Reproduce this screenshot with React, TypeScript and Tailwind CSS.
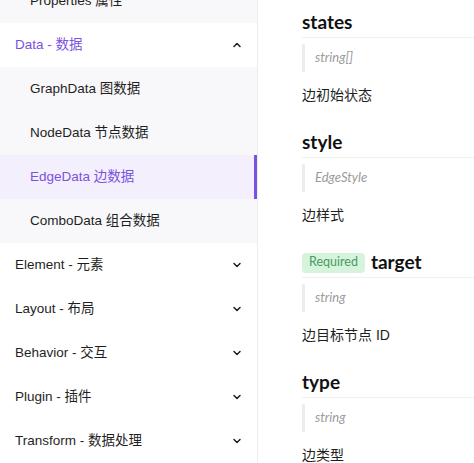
import React from "react";

interface NavItem {
  label: string;
  children?: string[];
  open?: boolean;
}

const nav: NavItem[] = [
  { label: "Data - 数据", open: true, children: ["GraphData 图数据", "NodeData 节点数据", "EdgeData 边数据", "ComboData 组合数据"] },
  { label: "Element - 元素" },
  { label: "Layout - 布局" },
  { label: "Behavior - 交互" },
  { label: "Plugin - 插件" },
  { label: "Transform - 数据处理" },
];

interface Prop {
  name: string;
  type: string;
  desc: string;
  required?: boolean;
}

const props: Prop[] = [
  { name: "states", type: "string[]", desc: "边初始状态" },
  { name: "style", type: "EdgeStyle", desc: "边样式" },
  { name: "target", type: "string", desc: "边目标节点 ID", required: true },
  { name: "type", type: "string", desc: "边类型" },
];

const Chevron: React.FC<{ up?: boolean }> = ({ up }) => (
  <svg width="10" height="10" viewBox="0 0 10 10" className="shrink-0">
    <path
      d={up ? "M2 6.5 L5 3.5 L8 6.5" : "M2 3.5 L5 6.5 L8 3.5"}
      fill="none"
      stroke="#1f1f1f"
      strokeWidth="1.5"
      strokeLinecap="round"
      strokeLinejoin="round"
    />
  </svg>
);

const active = "EdgeData 边数据";

export default function App() {
  return (
    <div
      className="flex w-[474px] h-[463px] overflow-hidden bg-white text-[#1f1f1f]"
      style={{ fontFamily: '"Liberation Sans", "Noto Sans CJK SC", sans-serif' }}
    >
      {/* sidebar menu, scrolled so the previous group is half hidden */}
      <aside className="w-[258px] shrink-0 border-r border-[#ececec] -mt-[21px]">
        <div className="h-11 flex items-center pl-[30px] bg-[#f8f8fa] text-[13.5px]">Properties 属性</div>
        {nav.map((item) => (
          <div key={item.label}>
            <div
              className={`h-11 flex items-center justify-between pl-[15px] pr-[15px] text-[13.5px] ${
                item.open ? "text-[#7b52e0]" : ""
              }`}
            >
              <span>{item.label}</span>
              <Chevron up={item.open} />
            </div>
            {item.open && (
              <div className="bg-[#f8f8fa]">
                {item.children!.map((c) => (
                  <div
                    key={c}
                    className={`h-11 flex items-center pl-[30px] text-[13.5px] ${
                      c === active ? "bg-[#f4effd] text-[#7b52e0] border-r-[3px] border-[#7b52e0]" : ""
                    }`}
                  >
                    {c}
                  </div>
                ))}
              </div>
            )}
          </div>
        ))}
      </aside>

      {/* property docs */}
      <main className="flex-1 pl-[44px] pt-[8px]">
        {props.map((p) => (
          <section key={p.name} className="mb-[22px]">
            <div className="h-[30px] flex items-center gap-[6px] border-b border-[#f0f0f0]">
              {p.required && (
                <span
                  className="px-[7px] h-[20px] flex items-center rounded-[4px] bg-[#d6f3dc] text-[#4a9a62] text-[12.5px]"
                  style={{ fontFamily: "Lato, sans-serif" }}
                >
                  Required
                </span>
              )}
              <h3 className="text-[19px] font-bold text-[#111]" style={{ fontFamily: "Lato, sans-serif" }}>
                {p.name}
              </h3>
            </div>
            <div className="mt-[6px] h-[28px] flex items-center border-l-[3px] border-[#ededed] pl-[10px]">
              <span className="italic text-[13px] text-[#9a9a9a]" style={{ fontFamily: "Lato, sans-serif" }}>
                {p.type}
              </span>
            </div>
            <p className="mt-[12px] text-[14px] leading-[22px]">{p.desc}</p>
          </section>
        ))}
      </main>
    </div>
  );
}
